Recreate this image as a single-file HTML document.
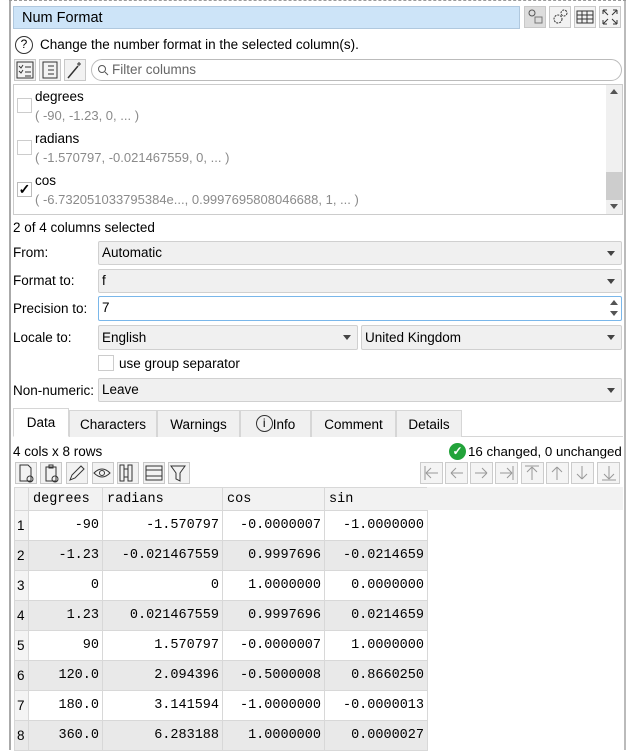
<!DOCTYPE html>
<html><head><meta charset="utf-8"><style>
*{box-sizing:border-box;margin:0;padding:0}
body{width:628px;height:750px;overflow:hidden;background:#fff;font-family:"Liberation Sans",sans-serif;font-size:13px;color:#000;position:relative}
.a{position:absolute}
.combo{position:absolute;background:#f0f0f0;border:1px solid #d0d0d0;border-radius:2px;padding-left:3px;line-height:22px;font-size:13.5px}
.combo .arr{position:absolute;right:6px;top:9px;width:0;height:0;border-left:4px solid transparent;border-right:4px solid transparent;border-top:5px solid #444}
.lbl{position:absolute;left:13px;font-size:13.5px}
.cb{position:absolute;width:15px;height:15px;border:1px solid #ccc;background:#fff}
.btn{position:absolute;width:22px;height:22px;border:1px solid #c8c8c8;background:#f2f2f2}
.tab{position:absolute;top:410px;height:27px;border:1px solid #d6d6d6;border-bottom:none;background:#f0f0f0;text-align:center;line-height:28px;font-size:13.5px}
table{position:absolute;left:14px;top:487px;border-collapse:collapse;font-family:"Liberation Mono",monospace;font-size:13.5px}
td{height:30px;border:1px solid #d8d8d8;text-align:right;padding-right:3px}
td:first-child{text-align:left;padding:0 0 0 2px;font-family:"Liberation Sans",sans-serif;background:#f4f4f4;width:14px}
tr.g td{background:#e9e9e9}
tr.h td{height:23px;text-align:left;padding-left:4px;background:#f2f2f2}
.grey{color:#8a8a8a}
</style></head><body>
<div class="a" style="left:9px;top:0;width:2px;height:750px;background:#aaa"></div>
<div class="a" style="left:624px;top:0;width:2px;height:750px;background:#bbb"></div>
<div class="a" style="left:9px;top:0;width:617px;height:3px;border-top:1px dashed #999"></div>
<div class="a" style="left:13px;top:6px;width:507px;height:23px;background:#cde4f8;border:1px solid #b0c8de;padding-left:8px;line-height:22px;font-size:14.5px">Num Format</div>
<div class="btn" style="left:524px;top:6px;background:#ddd"><svg width="20" height="20"><circle cx="7" cy="6" r="3" fill="none" stroke="#555"/><rect x="10" y="10" width="7" height="6" fill="none" stroke="#777"/></svg></div>
<div class="btn" style="left:549px;top:6px"><svg width="20" height="20"><circle cx="8" cy="12" r="4" fill="none" stroke="#333" stroke-dasharray="2 1"/><circle cx="14" cy="6" r="3" fill="none" stroke="#333" stroke-dasharray="2 1"/></svg></div>
<div class="btn" style="left:574px;top:6px"><svg width="20" height="20"><rect x="2" y="4" width="16" height="12" fill="none" stroke="#333"/><path d="M2 8h16M2 12h16M7 4v12M12 4v12" stroke="#333"/></svg></div>
<div class="btn" style="left:599px;top:6px"><svg width="20" height="20"><path d="M3 3l5 5M3 3h4M3 3v4M17 3l-5 5M17 3h-4M17 3v4M3 17l5-5M3 17h4M3 17v-4M17 17l-5-5M17 17h-4M17 17v-4" stroke="#333" fill="none"/></svg></div>
<div class="a" style="left:15px;top:36px;width:18px;height:18px;border:1.5px solid #333;border-radius:50%;text-align:center;line-height:15px;font-size:12px">?</div>
<div class="a" style="left:40px;top:37px;font-size:13.5px">Change the number format in the selected column(s).</div>
<div class="btn" style="left:14px;top:59px"><svg width="20" height="20"><rect x="2" y="2" width="16" height="16" fill="none" stroke="#333"/><path d="M4 6l2 2 2-3M4 11l2 2 2-3M10 7h6M10 12h6M10 16h6" stroke="#333" fill="none"/></svg></div>
<div class="btn" style="left:39px;top:59px"><svg width="20" height="20"><rect x="3" y="2" width="14" height="16" fill="none" stroke="#333"/><path d="M8 6h6M8 10h6M8 14h6" stroke="#333"/></svg></div>
<div class="btn" style="left:64px;top:59px"><svg width="20" height="20"><path d="M3 18L13 6" stroke="#333" stroke-width="1.5"/><path d="M14 2v4M12 4h4" stroke="#333"/></svg></div>
<div class="a" style="left:91px;top:59px;width:531px;height:22px;border:1px solid #bbb;border-radius:11px;padding-left:20px;line-height:20px;color:#666;font-size:13.5px">Filter columns</div>
<svg class="a" style="left:97px;top:64px" width="12" height="12"><circle cx="5" cy="5" r="3.5" fill="none" stroke="#555"/><path d="M8 8l3 3" stroke="#555"/></svg>
<div class="a" style="left:13px;top:84px;width:610px;height:131px;border:1px solid #ccc"></div>
<div class="a" style="left:606px;top:85px;width:16px;height:129px;background:#f0f0f0"></div>
<div class="a" style="left:606px;top:172px;width:16px;height:28px;background:#cdcdcd"></div>
<div class="a" style="left:610px;top:89px;border-left:4px solid transparent;border-right:4px solid transparent;border-bottom:5px solid #555"></div>
<div class="a" style="left:610px;top:204px;border-left:4px solid transparent;border-right:4px solid transparent;border-top:5px solid #555"></div>
<div class="cb" style="left:17px;top:98px"></div>
<div class="a" style="left:35px;top:89px;font-size:13.5px">degrees</div>
<div class="a grey" style="left:35px;top:108px;font-size:13px">( -90, -1.23, 0, ... )</div>
<div class="cb" style="left:17px;top:140px"></div>
<div class="a" style="left:35px;top:131px;font-size:13.5px">radians</div>
<div class="a grey" style="left:35px;top:150px;font-size:13px">( -1.570797, -0.021467559, 0, ... )</div>
<div class="cb" style="left:17px;top:182px;border-color:#bbb;text-align:center;line-height:13px;font-size:14px;font-weight:bold">✓</div>
<div class="a" style="left:35px;top:173px;font-size:13.5px">cos</div>
<div class="a grey" style="left:35px;top:192px;font-size:13px">( -6.732051033795384e..., 0.9997695808046688, 1, ... )</div>
<div class="a" style="left:13px;top:220px;font-size:13.5px">2 of 4 columns selected</div>
<div class="lbl" style="top:245px">From:</div>
<div class="combo" style="left:98px;top:241px;width:524px;height:24px">Automatic<span class="arr"></span></div>
<div class="lbl" style="top:273px">Format to:</div>
<div class="combo" style="left:98px;top:269px;width:524px;height:24px">f<span class="arr"></span></div>
<div class="lbl" style="top:301px">Precision to:</div>
<div class="combo" style="left:98px;top:296px;width:524px;height:25px;background:#fff;border-color:#7ab7ea">7</div>
<div class="a" style="left:610px;top:300px;border-left:4px solid transparent;border-right:4px solid transparent;border-bottom:5px solid #555"></div>
<div class="a" style="left:610px;top:311px;border-left:4px solid transparent;border-right:4px solid transparent;border-top:5px solid #555"></div>
<div class="lbl" style="top:330px">Locale to:</div>
<div class="combo" style="left:98px;top:325px;width:260px;height:25px;line-height:23px">English<span class="arr"></span></div>
<div class="combo" style="left:361px;top:325px;width:261px;height:25px;line-height:23px">United Kingdom<span class="arr"></span></div>
<div class="cb" style="left:98px;top:355px;width:16px;height:16px"></div>
<div class="a" style="left:119px;top:356px;font-size:13.5px">use group separator</div>
<div class="lbl" style="top:383px">Non-numeric:</div>
<div class="combo" style="left:98px;top:378px;width:524px;height:24px">Leave<span class="arr"></span></div>
<div class="a" style="left:13px;top:436px;width:610px;height:1px;background:#d6d6d6"></div>
<div class="tab" style="left:13px;width:56px;top:408px;height:29px;background:#fff;border-bottom:1px solid #fff">Data</div>
<div class="tab" style="left:69px;width:88px">Characters</div>
<div class="tab" style="left:157px;width:83px">Warnings</div>
<div class="tab" style="left:240px;width:71px"><span style="display:inline-block;width:17px;height:17px;border:1px solid #333;border-radius:50%;line-height:15px;font-size:12px;vertical-align:middle;margin-top:-3px">i</span>Info</div>
<div class="tab" style="left:311px;width:85px">Comment</div>
<div class="tab" style="left:396px;width:66px">Details</div>
<div class="a" style="left:13px;top:444px;font-size:13.5px">4 cols x 8 rows</div>
<div class="a" style="left:449px;top:443px;width:17px;height:17px;border-radius:50%;background:#22a33a;color:#fff;text-align:center;line-height:17px;font-size:12px;font-weight:bold">✓</div>
<div class="a" style="left:468px;top:444px;font-size:13.3px">16 changed, 0 unchanged</div>
<div class="btn" style="left:15px;top:462px"></div><div class="btn" style="left:40px;top:462px"></div><div class="btn" style="left:66px;top:462px"></div><div class="btn" style="left:92px;top:462px"></div><div class="btn" style="left:117px;top:462px"></div><div class="btn" style="left:143px;top:462px"></div><div class="btn" style="left:168px;top:462px"></div>
<svg class="a" style="left:15px;top:462px" width="180" height="22" fill="none" stroke="#333">
<path d="M5 3h8l3 3v13H5z"/><circle cx="15" cy="17" r="3"/>
<path d="M31 5h10v14H31zM34 3h4v3h-4z"/><circle cx="40" cy="17" r="3"/>
<path d="M55 18l2-5 9-9 3 3-9 9z"/>
<path d="M79 11q8-8 16 0q-8 8-16 0z"/><circle cx="87" cy="11" r="2.5"/>
<path d="M105 3h4v16h-4zM113 3h4v16h-4zM109 7h4M109 15h4"/>
<path d="M131 4h16v14h-16zM131 8h16M131 14h16"/>
<path d="M156 4h14l-5 7v8l-4-2v-6z"/>
</svg>
<svg class="a" style="left:420px;top:462px" width="202" height="22" fill="none" stroke="#999">
<rect x="0.5" y="0.5" width="22" height="21" fill="#f4f4f4" stroke="#ccc"/><rect x="25.5" y="0.5" width="22" height="21" fill="#f4f4f4" stroke="#ccc"/><rect x="50.5" y="0.5" width="22" height="21" fill="#f4f4f4" stroke="#ccc"/><rect x="75.5" y="0.5" width="22" height="21" fill="#f4f4f4" stroke="#ccc"/><rect x="101.5" y="0.5" width="22" height="21" fill="#f4f4f4" stroke="#ccc"/><rect x="126.5" y="0.5" width="22" height="21" fill="#f4f4f4" stroke="#ccc"/><rect x="151.5" y="0.5" width="22" height="21" fill="#f4f4f4" stroke="#ccc"/><rect x="177.5" y="0.5" width="22" height="21" fill="#f4f4f4" stroke="#ccc"/>
<path d="M5 4v14M6 11h12M6 11l5-5M6 11l5 5"/>
<path d="M31 11h12M31 11l5-5M31 11l5 5"/>
<path d="M55 11h12M67 11l-5-5M67 11l-5 5"/>
<path d="M93 4v14M80 11h12M92 11l-5-5M92 11l-5 5"/>
<path d="M105 4h14M112 5v13M112 5l-5 5M112 5l5 5"/>
<path d="M137 5v13M137 5l-5 5M137 5l5 5"/>
<path d="M162 4v13M162 17l-5-5M162 17l5-5"/>
<path d="M182 18h14M189 4v13M189 17l-5-5M189 17l5-5"/>
</svg>
<table>
<tr class="h"><td></td><td style="width:74px">degrees</td><td style="width:120px">radians</td><td style="width:102px">cos</td><td style="width:103px">sin</td></tr>
<tr><td>1</td><td>-90</td><td>-1.570797</td><td>-0.0000007</td><td>-1.0000000</td></tr>
<tr class="g"><td>2</td><td>-1.23</td><td>-0.021467559</td><td>0.9997696</td><td>-0.0214659</td></tr>
<tr><td>3</td><td>0</td><td>0</td><td>1.0000000</td><td>0.0000000</td></tr>
<tr class="g"><td>4</td><td>1.23</td><td>0.021467559</td><td>0.9997696</td><td>0.0214659</td></tr>
<tr><td>5</td><td>90</td><td>1.570797</td><td>-0.0000007</td><td>1.0000000</td></tr>
<tr class="g"><td>6</td><td>120.0</td><td>2.094396</td><td>-0.5000008</td><td>0.8660250</td></tr>
<tr><td>7</td><td>180.0</td><td>3.141594</td><td>-1.0000000</td><td>-0.0000013</td></tr>
<tr class="g"><td>8</td><td>360.0</td><td>6.283188</td><td>1.0000000</td><td>0.0000027</td></tr>
</table>
<div class="a" style="left:427px;top:487px;width:196px;height:23px;background:#f2f2f2"></div>
</body></html>
